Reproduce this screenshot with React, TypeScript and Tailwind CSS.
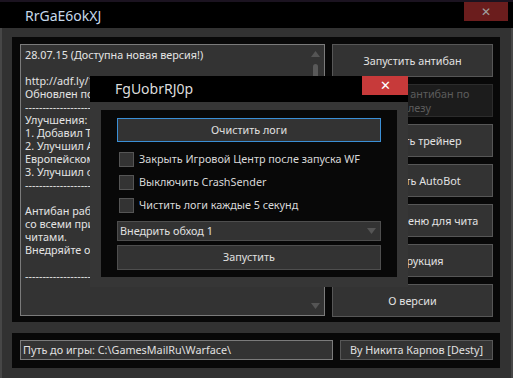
const font = { fontFamily: '"Noto Sans", "Open Sans", sans-serif' };

const logLines = [
  '28.07.15 (Доступна новая версия!)',
  '',
  'http://adf.ly/1KWBAF',
  'Обновлен по ссылке выше',
  '-----------------------------------------------',
  'Улучшения:',
  '1. Добавил Тренер',
  '2. Улучшил Антибан на',
  'Европейском сервере',
  '3. Улучшил стабильность',
  '-----------------------------------------------',
  '',
  'Антибан работает',
  'со всеми приватными',
  'читами.',
  'Внедряйте обход',
  '',
  '-----------------------------------------------',
];

const sideButtons = [
  { label: 'Запустить антибан' },
  { label: 'Запустить антибан по железу', disabled: true },
  { label: 'Запустить трейнер' },
  { label: 'Запустить AutoBot' },
  { label: 'Внедрить меню для чита' },
  { label: 'Инструкция' },
  { label: 'О версии' },
];

const options = ['Закрыть Игровой Центр после запуска WF', 'Выключить CrashSender', 'Чистить логи каждые 5 секунд'];

function SideButton({ label, disabled }: { label: string; disabled?: boolean }) {
  return (
    <div
      className={`flex h-[33px] items-center justify-center text-center text-[10.8px] leading-[14px] ${
        disabled
          ? 'border border-[#2c2c2c] bg-[#1c1c1c] px-[22px] text-[#5c5c5c]'
          : 'whitespace-nowrap border border-[#575757] bg-[#333333] px-[4px] text-[#e2e2e2]'
      }`}
    >
      {label}
    </div>
  );
}

function Checkbox({ label }: { label: string }) {
  return (
    <div className="flex h-[15px] items-center gap-[5px] pl-[2px]">
      <div className="h-[15px] w-[15px] border border-[#555555] bg-[#333333]" />
      <span className="whitespace-nowrap text-[10.8px] text-[#d8d8d8]">{label}</span>
    </div>
  );
}

function Dialog() {
  return (
    <div className="absolute left-[90px] top-[76px] w-[318px]">
      {/* Title */}
      <div className="flex h-[26px] items-start justify-between bg-black">
        <span className="pl-[25px] pt-[3px] text-[14px] leading-[20px] text-[#dddddd]">FgUobrRJ0p</span>
        <div className="flex h-[19px] w-[46px] items-center justify-center bg-[#c73a3a] text-[13px] leading-none text-white">
          ✕
        </div>
      </div>
      {/* Body */}
      <div className="bg-[#363636] px-[11px] pb-[10px] pt-[8px]">
        <div className="flex flex-col bg-[#080808] px-[16px] pb-[7px] pt-[8px]">
          <div className="flex h-[24px] items-center justify-center border border-[#3b8fd6] bg-[#333333] text-[10.8px] text-[#e0e0e0]">
            Очистить логи
          </div>
          <div className="mt-[10px] flex flex-col gap-[8px]">
            {options.map(o => (
              <Checkbox key={o} label={o} />
            ))}
          </div>
          <div className="mt-[8px] flex h-[20px] items-center justify-between border border-[#4e4e4e] bg-[#333333] pl-[2px] pr-[4px]">
            <span className="text-[10.8px] text-[#e0e0e0]">Внедрить обход 1</span>
            <svg width="9" height="6" viewBox="0 0 9 6">
              <path d="M0 0 H9 L4.5 6 Z" fill="#555555" />
            </svg>
          </div>
          <div className="mt-[4px] flex h-[25px] items-center justify-center border border-[#4e4e4e] bg-[#333333] text-[10.8px] text-[#e0e0e0]">
            Запустить
          </div>
        </div>
      </div>
    </div>
  );
}

export default function App() {
  return (
    <div className="relative h-[378px] w-[513px] overflow-hidden bg-[#1b1320]" style={font}>
      {/* Title bar */}
      <div className="mt-[2px] flex h-[26px] items-start justify-between bg-black">
        <span className="pl-[25px] pt-[4px] text-[14px] leading-[20px] text-[#c7d8ea]">RrGaE6okXJ</span>
        <div className="mr-[5px] flex h-[19px] w-[44px] items-center justify-center bg-[#6b1d1d] text-[12px] text-[#a0a0a0]">
          ✕
        </div>
      </div>

      {/* Window body */}
      <div className="flex h-[350px] flex-col border-l-2 border-r-2 border-[#474747] bg-[#323232] pl-[10px] pr-[11px] pt-[9px]">
        {/* Main panel */}
        <div className="flex h-[285px] gap-[7px] bg-[#080808] pl-[8px] pr-[7px] pt-[7px]">
          {/* Log box */}
          <div className="relative h-[272px] w-[305px] border border-[#7b7b7b] bg-[#333333]">
            <div className="w-[285px] overflow-hidden whitespace-pre pl-[4px] pt-[3px] text-[10.8px] leading-[13px] text-[#e4e4e4]">
              {logLines.map((l, i) => (
                <div key={i} className="h-[13px]">
                  {l}
                </div>
              ))}
            </div>
            {/* Scrollbar */}
            <div className="absolute right-[4px] top-[6px] flex h-[258px] w-[10px] flex-col items-center justify-between">
              <svg width="9" height="6" viewBox="0 0 9 6">
                <path d="M4.5 0 L9 6 H0 Z" fill="#555555" />
              </svg>
              <div className="absolute top-[13px] h-[14px] w-[5px] rounded-t-full bg-[#595959]" />
              <svg width="9" height="6" viewBox="0 0 9 6">
                <path d="M0 0 H9 L4.5 6 Z" fill="#555555" />
              </svg>
            </div>
          </div>
          {/* Side buttons */}
          <div className="flex w-[161px] flex-col gap-[7px]">
            {sideButtons.map(b => (
              <SideButton key={b.label} label={b.label} disabled={b.disabled} />
            ))}
          </div>
        </div>

        {/* Footer panel */}
        <div className="mt-[11px] flex h-[35px] items-start gap-[7px] bg-[#080808] pl-[8px] pr-[7px] pt-[7px]">
          <div className="flex h-[20px] w-[313px] items-center border border-[#7b7b7b] bg-[#333333] pl-[2px] text-[10.8px] text-[#e0e0e0]">
            Путь до игры: C:\GamesMailRu\Warface\
          </div>
          <div className="flex h-[20px] flex-1 items-center justify-center border border-[#575757] bg-[#333333] text-[10.8px] text-[#e0e0e0]">
            By Никита Карпов [Desty]
          </div>
        </div>
      </div>

      <Dialog />
    </div>
  );
}
